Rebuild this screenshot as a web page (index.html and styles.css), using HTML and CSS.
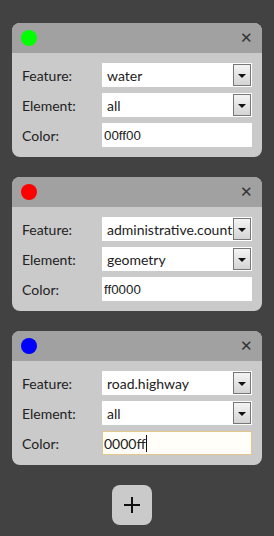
FILE: index.html
```html
<!DOCTYPE html>
<html lang="en">
<head>
    <meta charset="UTF-8">
    <meta name="viewport" content="width=device-width, initial-scale=1.0">
    <title>Map Styles</title>
    <link rel="stylesheet" href="styles.css">
</head>
<body>

    <div class="styles-list">

        <div class="style-card">
            <div class="card-header">
                <span class="swatch" style="background: #00ff00"></span>
                <span class="close">&#x2715;</span>
            </div>
            <div class="card-body">
                <label class="field-label">Feature:</label>
                <div class="select-box">
                    <span class="select-value">water</span>
                    <span class="select-arrow"></span>
                </div>
                <label class="field-label">Element:</label>
                <div class="select-box">
                    <span class="select-value">all</span>
                    <span class="select-arrow"></span>
                </div>
                <label class="field-label">Color:</label>
                <input class="color-input" type="text" value="00ff00">
            </div>
        </div>

        <div class="style-card">
            <div class="card-header">
                <span class="swatch" style="background: #ff0000"></span>
                <span class="close">&#x2715;</span>
            </div>
            <div class="card-body">
                <label class="field-label">Feature:</label>
                <div class="select-box">
                    <span class="select-value">administrative.country</span>
                    <span class="select-arrow"></span>
                </div>
                <label class="field-label">Element:</label>
                <div class="select-box">
                    <span class="select-value">geometry</span>
                    <span class="select-arrow"></span>
                </div>
                <label class="field-label">Color:</label>
                <input class="color-input" type="text" value="ff0000">
            </div>
        </div>

        <div class="style-card">
            <div class="card-header">
                <span class="swatch" style="background: #0000ff"></span>
                <span class="close">&#x2715;</span>
            </div>
            <div class="card-body">
                <label class="field-label">Feature:</label>
                <div class="select-box">
                    <span class="select-value">road.highway</span>
                    <span class="select-arrow"></span>
                </div>
                <label class="field-label">Element:</label>
                <div class="select-box">
                    <span class="select-value">all</span>
                    <span class="select-arrow"></span>
                </div>
                <label class="field-label">Color:</label>
                <div class="color-input focused">0000ff<span class="caret"></span></div>
            </div>
        </div>

        <button class="add-button">+</button>
    </div>

</body>
</html>
```

FILE: styles.css
```css
body {
    margin: 0;
    background-color: #424242;
    font-family: Lato, "Open Sans", sans-serif;
    font-size: 14px;
    color: #222;
}

.styles-list {
    display: flex;
    flex-direction: column;
    align-items: center;
    gap: 20px;
    padding: 23px 12px 11px;
}

.style-card {
    width: 250px;
    background: #cacaca;
    border-radius: 8px;
    overflow: hidden;
}

.card-header {
    height: 30px;
    background: #a1a1a1;
    display: flex;
    align-items: center;
    justify-content: space-between;
    padding: 0 9px 0 9px;
}

.swatch {
    width: 16px;
    height: 16px;
    border-radius: 50%;
}

.close {
    font-family: "DejaVu Sans", sans-serif;
    font-size: 15px;
    font-weight: 300;
    color: #333;
}

.card-body {
    display: grid;
    grid-template-columns: 80px 150px;
    row-gap: 6px;
    align-items: center;
    padding: 10px;
}

.field-label {
    color: #222;
}

.select-box {
    height: 24px;
    background: white;
    display: flex;
    align-items: center;
    overflow: hidden;
}

.select-value {
    flex: 1;
    padding-left: 5px;
    white-space: nowrap;
    overflow: hidden;
}

.select-arrow {
    width: 16px;
    height: 20px;
    margin-right: 1px;
    border: 1px solid #777;
    background: linear-gradient(#f4f4f4, #d4d4d4);
    position: relative;
}

.select-arrow::after {
    content: "";
    position: absolute;
    left: 4px;
    top: 9px;
    border-left: 4px solid transparent;
    border-right: 4px solid transparent;
    border-top: 4px solid #111;
}

.color-input {
    width: 150px;
    height: 24px;
    box-sizing: border-box;
    border: 1px solid #fff;
    background: white;
    padding: 0 0 0 1px;
    display: flex;
    align-items: center;
    color: #222;
}

.color-input.focused {
    border-color: #e2c68c;
    background: #fffef8;
}

.caret {
    width: 1px;
    height: 17px;
    background: #111;
}

.add-button {
    width: 40px;
    height: 40px;
    margin-right: 10px;
    border: none;
    border-radius: 8px;
    background: #cacaca;
    position: relative;
    padding: 0;
}

.add-button::before,
.add-button::after {
    content: "";
    position: absolute;
    left: 12px;
    top: 19px;
    width: 16px;
    height: 2px;
    background: #111;
}

.add-button::after {
    transform: rotate(90deg);
}
```
